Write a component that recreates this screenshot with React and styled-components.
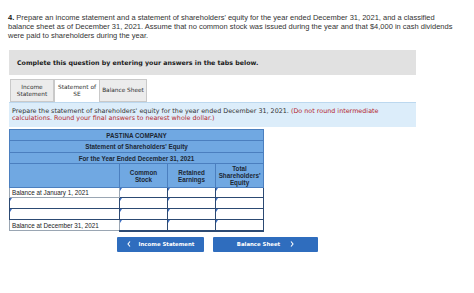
import React from 'react';
import styled, { createGlobalStyle } from 'styled-components';

const GlobalStyle = createGlobalStyle`
  html, body {
    margin: 0;
    padding: 0;
    background: #ffffff;
  }
  body {
    font-family: "Liberation Sans", Arial, sans-serif;
  }
`;

const Page = styled.div`
  width: 474px;
  height: 293px;
  overflow: hidden;
  padding: 13px 0 0 8px;
  box-sizing: border-box;
`;

const Question = styled.p`
  margin: 0;
  font-size: 7.5px;
  line-height: 9px;
  color: #333;
  white-space: nowrap;
  b { color: #111; }
`;

const Prompt = styled.div`
  margin: 10px 0 0 1px;
  width: 407px;
  height: 25px;
  background: #e1e1e1;
  display: flex;
  align-items: center;
  padding-left: 8px;
  box-sizing: border-box;
  font-family: "DejaVu Sans", Verdana, sans-serif;
  font-weight: bold;
  font-size: 6.3px;
  color: #1a1a1a;
`;

const Tabs = styled.div`
  display: flex;
  margin: 4px 0 0 2px;
  height: 23px;
`;

const Tab = styled.div`
  width: ${p => p.w}px;
  height: 23px;
  box-sizing: border-box;
  display: flex;
  align-items: center;
  justify-content: center;
  text-align: center;
  font-family: "DejaVu Sans", Verdana, sans-serif;
  font-size: 5.8px;
  line-height: 7px;
  color: #333;
  background: ${p => (p.active ? '#ffffff' : '#ececec')};
  border: 1px solid #c9c9c9;
  border-bottom: ${p => (p.active ? 'none' : '1px solid #c9c9c9')};
  border-left: ${p => (p.first || p.active ? '1px solid #c9c9c9' : 'none')};
`;

const Info = styled.div`
  margin-left: 1px;
  width: 407px;
  height: 25px;
  box-sizing: border-box;
  background: #dcedfa;
  border-top: 1px solid #bcd8ef;
  padding: 5px 0 0 3px;
  font-family: "DejaVu Sans", Verdana, sans-serif;
  font-size: 6.4px;
  line-height: 7px;
  color: #333;
  white-space: nowrap;
  span { color: #b3262c; }
`;

const Table = styled.table`
  margin: 2px 0 0 1px;
  border-collapse: collapse;
  width: 254px;
  table-layout: fixed;
  font-family: "Liberation Sans", Arial, sans-serif;
  font-size: 6.3px;
`;

const Row = styled.tr`
  height: ${p => p.h}px;
`;

const HeadCell = styled.th`
  background: #70a8e2;
  border: 1px solid #4b7fbf;
  color: #1c2733;
  font-weight: bold;
  text-align: center;
  padding: 0;
  line-height: 7px;
`;

const LabelCell = styled.td`
  border: 1px solid #9aa6b3;
  background: #fff;
  padding: 0 0 0 2px;
  color: #222;
  white-space: nowrap;
  line-height: 7px;
`;

const InputCell = styled.td`
  position: relative;
  background: #fff;
  padding: 0;
  border: 1px solid #2c4a73;
  border-bottom-width: ${p => (p.last ? 2 : 1)}px;
  &::before {
    content: '';
    position: absolute;
    left: 0;
    top: 0;
    border-top: 3px solid #3d6fc4;
    border-right: 2px solid transparent;
  }
`;

const Buttons = styled.div`
  display: flex;
  gap: 9px;
  margin: 5px 0 0 109px;
`;

const NavButton = styled.button`
  width: ${p => p.w}px;
  height: 15px;
  border: none;
  border-radius: 1px;
  background: #2f6dbe;
  color: #fff;
  font-family: "DejaVu Sans", Verdana, sans-serif;
  font-weight: bold;
  font-size: 5.4px;
  display: flex;
  align-items: center;
  justify-content: center;
  gap: ${p => p.gap}px;
  padding: 0;
`;

const Chevron = ({ dir }) => (
  <svg width="4" height="6" viewBox="0 0 4 6">
    <path
      d={dir === 'left' ? 'M3 0.5 L1 3 L3 5.5' : 'M1 0.5 L3 3 L1 5.5'}
      stroke="#fff"
      strokeWidth="1.1"
      fill="none"
    />
  </svg>
);

const rows = [
  { label: 'Balance at January 1, 2021', h: 10 },
  { input: true, h: 11 },
  { input: true, h: 11 },
  { label: 'Balance at December 31, 2021', h: 11, last: true },
];

export default function App() {
  return (
    <>
      <GlobalStyle />
      <Page>
        <Question>
          <b>4.</b> Prepare an income statement and a statement of shareholders' equity for the year ended December 31, 2021, and a classified
          <br />
          balance sheet as of December 31, 2021. Assume that no common stock was issued during the year and that $4,000 in cash dividends
          <br />
          were paid to shareholders during the year.
        </Question>
        <Prompt>Complete this question by entering your answers in the tabs below.</Prompt>
        <Tabs>
          <Tab w={44} first>Income<br />Statement</Tab>
          <Tab w={46} active>Statement of<br />SE</Tab>
          <Tab w={47}>Balance Sheet</Tab>
        </Tabs>
        <Info>
          Prepare the statement of shareholders' equity for the year ended December 31, 2021. <span>(Do not round intermediate</span>
          <br />
          <span>calculations. Round your final answers to nearest whole dollar.)</span>
        </Info>
        <Table>
          <colgroup>
            <col style={{ width: 110 }} />
            <col style={{ width: 48 }} />
            <col style={{ width: 48 }} />
            <col style={{ width: 48 }} />
          </colgroup>
          <thead>
            <Row h={11}><HeadCell colSpan={4}>PASTINA COMPANY</HeadCell></Row>
            <Row h={12}><HeadCell colSpan={4}>Statement of Shareholders' Equity</HeadCell></Row>
            <Row h={11}><HeadCell colSpan={4}>For the Year Ended December 31, 2021</HeadCell></Row>
            <Row h={24}>
              <HeadCell />
              <HeadCell>Common<br />Stock</HeadCell>
              <HeadCell>Retained<br />Earnings</HeadCell>
              <HeadCell>Total<br />Shareholders'<br />Equity</HeadCell>
            </Row>
          </thead>
          <tbody>
            {rows.map((r, i) => (
              <Row key={i} h={r.h}>
                {r.input ? <InputCell /> : <LabelCell>{r.label}</LabelCell>}
                <InputCell last={r.last} />
                <InputCell last={r.last} />
                <InputCell last={r.last} />
              </Row>
            ))}
          </tbody>
        </Table>
        <Buttons>
          <NavButton w={87} gap={8}><Chevron dir="left" />Income Statement</NavButton>
          <NavButton w={105} gap={10}>Balance Sheet<Chevron dir="right" /></NavButton>
        </Buttons>
      </Page>
    </>
  );
}
